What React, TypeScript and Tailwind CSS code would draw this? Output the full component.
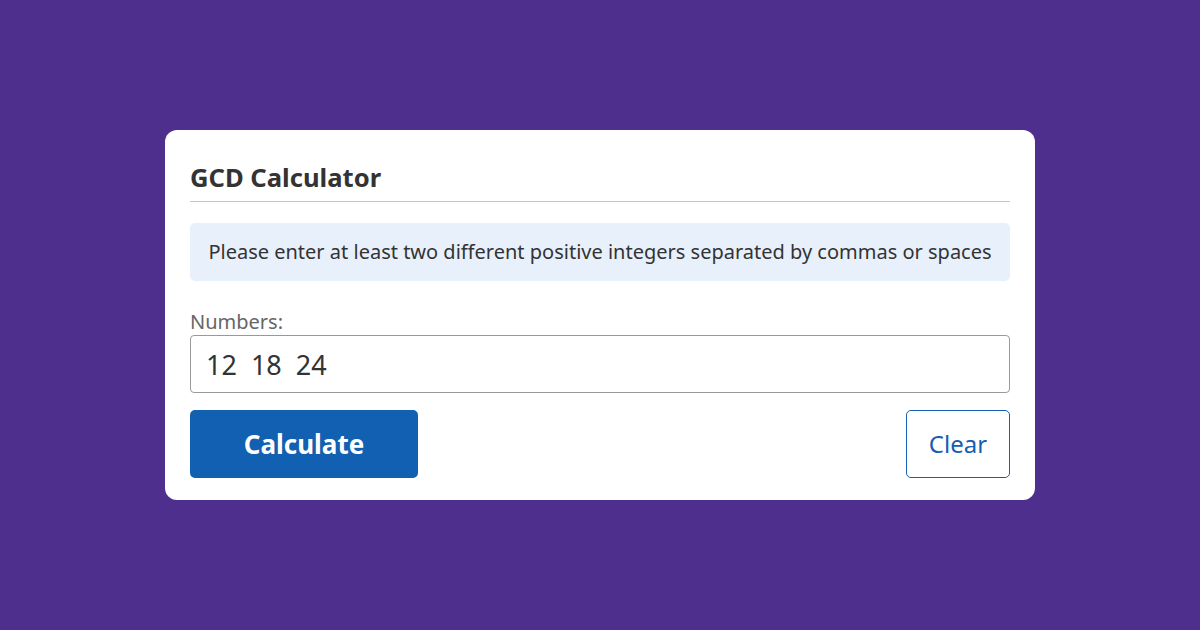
import { useState } from 'react';

export default function App() {
  const [value, setValue] = useState('12  18  24');

  return (
    <main className="flex h-[630px] w-[1200px] items-center justify-center bg-[#4f2f8e] font-['Noto_Sans',sans-serif]">
      <section className="w-[870px] rounded-[12px] bg-white px-[25px] pb-[22px] pt-[28px]">
        <h1 className="border-b border-[#c4c4c4] pb-[3px] text-[25.6px] font-bold leading-[40px] text-[#333]">
          GCD Calculator
        </h1>
        <div className="mt-[21px] flex h-[58px] items-center justify-center rounded-[5px] bg-[#e8f0fb] text-[20px] text-[#333]">
          Please enter at least two different positive integers separated by commas or spaces
        </div>
        <label className="mt-[29px] block text-[20px] leading-[24px] text-[#666]">Numbers:</label>
        <input
          className="mt-[1px] block h-[58px] w-full rounded-[4px] border border-[#999] px-[15px] text-[27px] text-[#333] outline-none"
          value={value}
          onChange={(e) => setValue(e.target.value)}
        />
        <div className="mt-[17px] flex items-center justify-between">
          <button className="h-[68px] w-[228px] rounded-[5px] bg-[#1160b2] text-[26px] font-bold text-white">
            Calculate
          </button>
          <button
            className="h-[68px] w-[104px] rounded-[5px] border border-[#1160b2] bg-white text-[24px] text-[#1160b2]"
            onClick={() => setValue('')}
          >
            Clear
          </button>
        </div>
      </section>
    </main>
  );
}
